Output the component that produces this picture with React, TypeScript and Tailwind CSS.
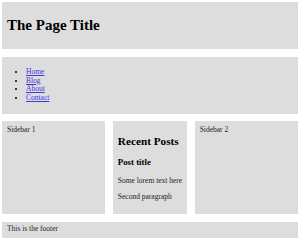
import React from 'react';

const box = 'bg-[#dddddd]';

export default function App() {
  return (
    <div className="w-[300px] h-[240px] bg-white p-[2px] text-[7.5px] text-[#222] font-['Liberation_Serif',serif] flex flex-col gap-[7.5px]">
      <header className={`${box} px-[5px] py-[5px]`}>
        <h1 className="text-[15px] font-bold text-black leading-[17px] my-[10px]">The Page Title</h1>
      </header>

      <nav className={`${box} px-[5px] py-[4px]`}>
        <ul className="list-disc pl-[19px] my-[7.5px] leading-[8.5px] text-black">
          <li><a href="#" className="underline text-[#4636e0]">Home</a></li>
          <li><a href="#" className="underline text-[#4636e0]">Blog</a></li>
          <li><a href="#" className="underline text-[#4636e0]">About</a></li>
          <li><a href="#" className="underline text-[#4636e0]">Contact</a></li>
        </ul>
      </nav>

      <div className="grid grid-cols-[1fr_auto_1fr] gap-[7.5px]">
        <aside className={`${box} p-[5px] leading-[8.6px]`}>Sidebar 1</aside>
        <main className={`${box} p-[5px] leading-[8.6px]`}>
          <h2 className="text-[11.25px] font-bold text-black leading-[13px] mt-[9px] mb-[9px]">Recent Posts</h2>
          <h3 className="text-[8.8px] font-bold text-black leading-[10px] mt-[9px] mb-[10px]">Post title</h3>
          <p className="my-[7px]">Some lorem text here</p>
          <p className="my-[7.5px]">Second paragraph</p>
        </main>
        <aside className={`${box} p-[5px] leading-[8.6px]`}>Sidebar 2</aside>
      </div>

      <footer className={`${box} px-[5px] py-[3.7px] leading-[8.6px]`}>This is the footer</footer>
    </div>
  );
}
